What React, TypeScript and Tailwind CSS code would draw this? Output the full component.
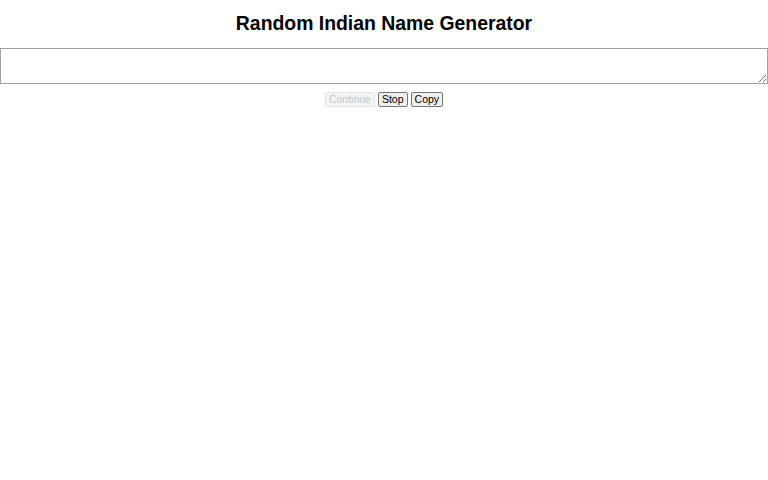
import React from "react";

export default function App() {
  return (
    <div className="min-h-[480px] w-full bg-white font-['Liberation_Sans',Arial,sans-serif] text-black">
      <h2 className="pt-[12px] text-center text-[19.4px] font-bold leading-[23px]">
        Random Indian Name Generator
      </h2>
      <div className="mt-[13px]">
        <textarea
          className="block h-[36px] w-full resize-y border border-[#a0a0a0] bg-white p-[2px] text-[13px] outline-none"
          readOnly
        />
      </div>
      <div className="mt-[8px] flex justify-center gap-[3px]">
        <button
          disabled
          className="h-[15px] rounded-[2px] border border-[#e3e3e3] bg-[#f4f4f4] px-[3px] text-[10.5px] leading-[13px] text-[#c4c4c4]"
        >
          Continue
        </button>
        <button className="h-[15px] rounded-[2px] border border-[#767676] bg-[#efefef] px-[3px] text-[10.5px] leading-[13px] text-black">
          Stop
        </button>
        <button className="h-[15px] rounded-[2px] border border-[#767676] bg-[#efefef] px-[3px] text-[10.5px] leading-[13px] text-black">
          Copy
        </button>
      </div>
    </div>
  );
}
